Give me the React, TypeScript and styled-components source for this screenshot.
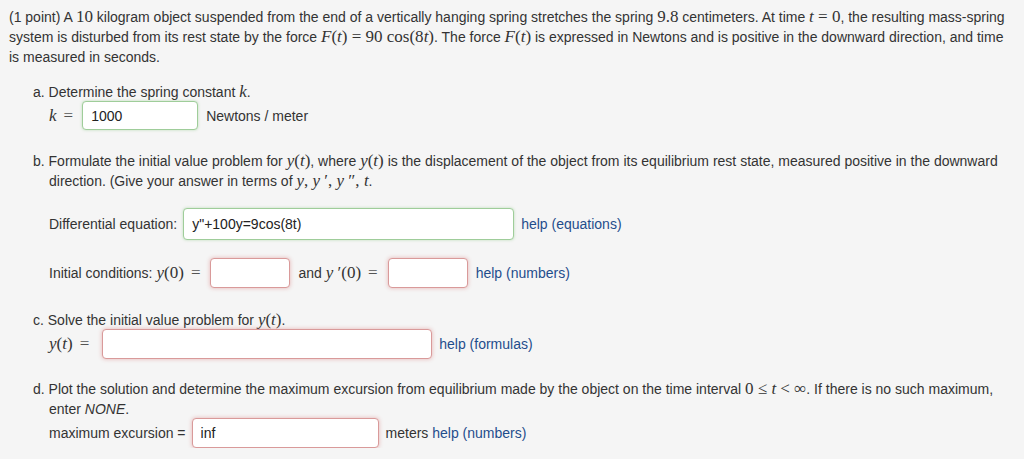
import React from "react";
import styled, { createGlobalStyle, css } from "styled-components";

const Global = createGlobalStyle`
  html, body { margin: 0; padding: 0; background: #f5f5f5; }
  body { font-family: "Liberation Sans", Arial, sans-serif; font-size: 14px; color: #333; }
`;

const Page = styled.div`
  padding: 7px 0 0 9px;
  width: 1015px;
  line-height: 20px;
`;

const Para = styled.p<{ $top?: number; $indent?: number }>`
  margin: ${(p) => p.$top ?? 0}px 0 0 ${(p) => p.$indent ?? 0}px;
  white-space: nowrap;
`;

const Sub = styled.span`
  display: inline-block;
  padding-left: 16px;
`;

const Row = styled.div<{ $top?: number; $indent?: number }>`
  display: flex;
  align-items: center;
  margin: ${(p) => p.$top ?? 0}px 0 0 ${(p) => p.$indent ?? 40}px;
  white-space: nowrap;
`;

const M = styled.span`
  font-family: "Liberation Serif", "DejaVu Serif", serif;
  font-size: 17px;
`;

const V = styled.i`
  font-family: "Liberation Serif", "DejaVu Serif", serif;
  font-style: italic;
`;

const Eq = styled.span`
  color: #555;
  padding: 0 7px;
`;

const Field = styled.input<{ $state: "ok" | "bad"; $w: number; $h?: number }>`
  box-sizing: border-box;
  width: ${(p) => p.$w}px;
  height: ${(p) => p.$h ?? 30}px;
  border-radius: 4px;
  background: #fff;
  font-family: "Liberation Sans", Arial, sans-serif;
  font-size: 14px;
  color: #222;
  padding: 0 8px;
  outline: none;
  ${(p) =>
    p.$state === "ok"
      ? css`
          border: 1px solid #9fcd9a;
          box-shadow: 0 0 3px rgba(120, 190, 110, 0.45);
        `
      : css`
          border: 1px solid #d99a9a;
          box-shadow: 0 0 4px rgba(210, 100, 100, 0.45);
        `}
`;

const Gap = styled.span<{ $w: number }>`
  display: inline-block;
  width: ${(p) => p.$w}px;
`;

const Help = styled.a`
  color: #1f4d8c;
  text-decoration: none;
`;

export default function App() {
  return (
    <>
      <Global />
      <Page>
        <Para>
          (1 point) A <M>10</M> kilogram object suspended from the end of a vertically hanging spring stretches the spring{" "}
          <M>9.8</M> centimeters. At time <M><V>t</V> = 0</M>, the resulting mass-spring
          <br />
          system is disturbed from its rest state by the force{" "}
          <M>
            <V>F</V>(<V>t</V>) = 90 cos(8<V>t</V>)
          </M>
          . The force{" "}
          <M>
            <V>F</V>(<V>t</V>)
          </M>{" "}
          is expressed in Newtons and is positive in the downward direction, and time
          <br />
          is measured in seconds.
        </Para>

        <Para $top={15} $indent={24}>
          a. Determine the spring constant <M><V>k</V></M>.
        </Para>
        <Row $top={-1}>
          <M><V>k</V></M>
          <M><Eq>=</Eq></M>
          <Gap $w={2} />
          <Field $state="ok" $w={116} $h={29} defaultValue="1000" />
          <Gap $w={8} />
          Newtons / meter
        </Row>

        <Para $top={21} $indent={24}>
          b. Formulate the initial value problem for{" "}
          <M><V>y</V>(<V>t</V>)</M>, where <M><V>y</V>(<V>t</V>)</M> is the displacement of the object from its equilibrium rest state, measured positive in the downward
          <br />
          <Sub>
            direction. (Give your answer in terms of{" "}
            <M>
              <V>y</V>, <V>y</V> ′, <V>y</V> ″, <V>t</V>
            </M>
            .
          </Sub>
        </Para>

        <Row $top={17}>
          Differential equation:
          <Gap $w={6} />
          <Field $state="ok" $w={331} $h={32} defaultValue={'y"+100y=9cos(8t)'} />
          <Gap $w={7} />
          <Help>help (equations)</Help>
        </Row>

        <Row $top={18}>
          Initial conditions:
          <Gap $w={4} />
          <M><V>y</V>(0)</M>
          <M><Eq>=</Eq></M>
          <Gap $w={3} />
          <Field $state="bad" $w={80} />
          <Gap $w={8} />
          and&nbsp;
          <M><V>y</V> ′(0)</M>
          <M><Eq>=</Eq></M>
          <Gap $w={3} />
          <Field $state="bad" $w={80} />
          <Gap $w={8} />
          <Help>help (numbers)</Help>
        </Row>

        <Para $top={22} $indent={24}>
          c. Solve the initial value problem for <M><V>y</V>(<V>t</V>)</M>.
        </Para>
        <Row $top={-1}>
          <M><V>y</V>(<V>t</V>)</M>
          <M><Eq>=</Eq></M>
          <Gap $w={6} />
          <Field $state="bad" $w={330} />
          <Gap $w={7} />
          <Help>help (formulas)</Help>
        </Row>

        <Para $top={20} $indent={24}>
          d. Plot the solution and determine the maximum excursion from equilibrium made by the object on the time interval{" "}
          <M>0 ≤ <V>t</V> &lt; ∞</M>. If there is no such maximum,
          <br />
          <Sub>
            enter <i>NONE</i>.
          </Sub>
        </Para>
        <Row $top={-1}>
          maximum excursion =
          <Gap $w={6} />
          <Field $state="bad" $w={187} defaultValue="inf" />
          <Gap $w={7} />
          meters&nbsp;<Help>help (numbers)</Help>
        </Row>
      </Page>
    </>
  );
}
